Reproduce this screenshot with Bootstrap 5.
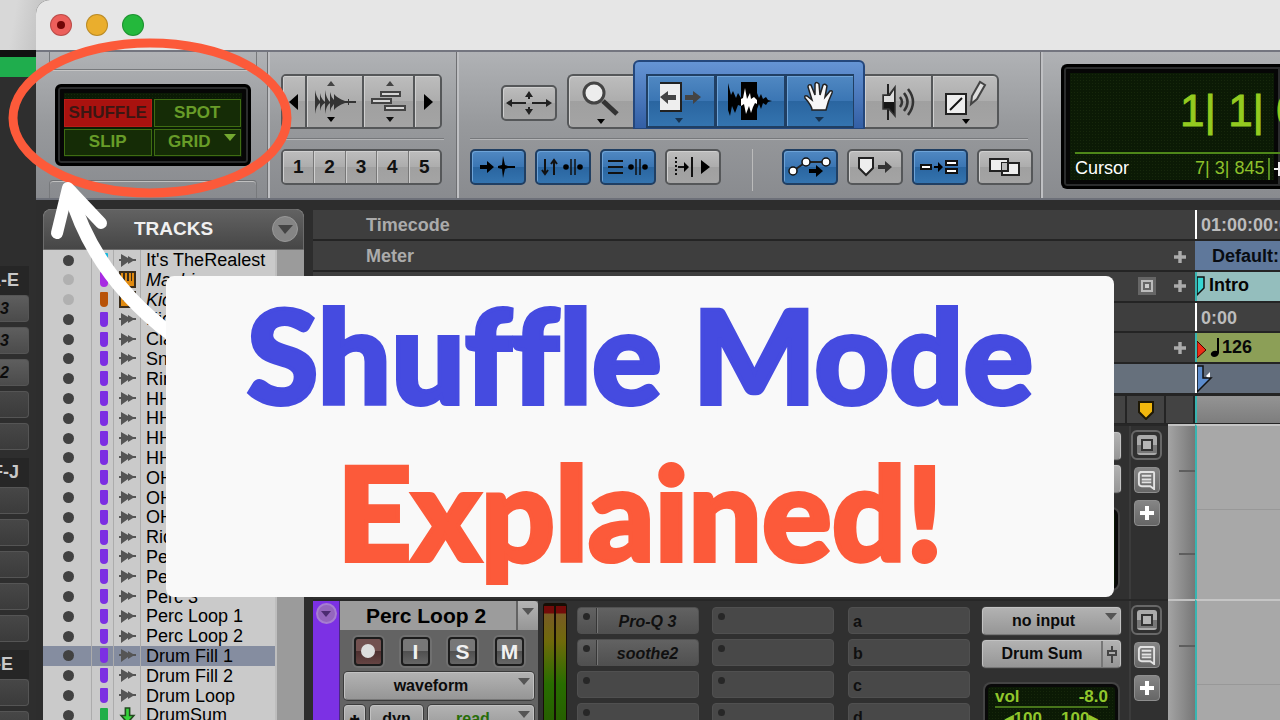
<!DOCTYPE html>
<html lang="en">
<head>
<meta charset="utf-8">
<meta name="viewport" content="width=device-width, initial-scale=1">
<title>Shuffle Mode Explained!</title>
<link rel="stylesheet" href="https://cdn.jsdelivr.net/npm/bootstrap@5.3.0/dist/css/bootstrap.min.css">
<style>
  body { font-family: "Liberation Sans", Arial, sans-serif; background: #2d2d2d; color: #000; line-height: 1.2; }
  button, select { font-family: inherit; }
  button { padding: 0; }
  svg { display: block; flex: none; }
  .scene { height: 100vh; background: #2d2d2d; }

  /* window behind */
  .behind { width: 48px; margin-right: -12px; background: #2e2e2e; }
  .behind-bar { height: 50px; background: linear-gradient(100deg, #d8d8d8 30%, #bdbdbd); }
  .behind-green { height: 27px; border-top: 7px solid #111; background: #1fad4d; }
  .behind-body { padding: 189px 19px 0 0; }
  .rack-label { height: 29px; font-size: 18px; font-weight: 700; color: #c8c8c8; padding-right: 10px; background: #262626; white-space: nowrap; display: flex; align-items: center; justify-content: flex-end; }
  .rack { gap: 5px; }
  .rack-slot { height: 27px; border: 1px solid #555; border-left: 0; border-radius: 0 4px 4px 0; background: linear-gradient(#474747, #3b3b3b); color: #0c0c0c; font: italic 700 16px/25px "Liberation Sans", sans-serif; display: flex; justify-content: flex-end; padding-right: 19px; }
  .rack-slot.used { background: linear-gradient(#5e5e5e, #4b4b4b); }

  /* main window */
  .daw { border-top-left-radius: 14px; background: #2d2d2d; z-index: 1; }
  .titlebar { height: 52px; background: #e6e6e6; border-bottom: 2px solid #73757f; padding-left: 14px; gap: 14px; }
  .light { width: 22px; height: 22px; border-radius: 50%; border: 1px solid #0003; }
  .toolbar { height: 148px; background: linear-gradient(#b0b2b5, #97999c 50%, #898b8f); border-bottom: 2px solid #6d7079; }
  .section { padding: 8px 9px 0 11px; border-left: 2px solid #bfc0c3; box-shadow: -1px 0 #6f7073; }
  .modes { width: 232px; padding: 0 11px 0 13px; border: 0; box-shadow: none; }
  .tab-top, .tab-bottom { height: 18px; border: 1px solid #77797c; border-top: 0; box-shadow: 0 1px #c5c5c5; }
  .tab-bottom { border-top: 1px solid #6e7073; border-bottom: 0; border-radius: 4px 4px 0 0; box-shadow: inset 0 1px #c0c0c0; }
  .lcd { background: #0b1a05 radial-gradient(#16270b 1px, transparent 1px) 0 0/3px 3px; border: 3px solid #000; box-shadow: inset 0 0 0 2px #2b2c2d, inset 0 0 0 6px #060606; border-radius: 6px; }
  .modes .lcd { height: 82px; margin: 0 6px; padding: 12px 7px 7px 6px; }
  .mode-grid { display: grid; grid-template-columns: 1fr 1fr; grid-template-rows: 1fr 1fr; gap: 2px; background: #0c1e04; height: 100%; }
  .mode { background: #152c06; border: 1px solid #3f6c12; color: #689c28; font-size: 17px; font-weight: 700; line-height: 20px; position: relative; }
  .mode.on { background: #a9120f; border-color: #b81c17; color: #3a1713; }
  .mode svg { position: absolute; right: 4px; top: 4px; }
  .row-top { height: 69px; }
  .rule { height: 2px; margin: 9px 4px 9px 0; background: #76787b; border-bottom: 1px solid #b5b6b8; }
  .tool { background: linear-gradient(#bdbdbd, #adadad 49%, #a0a0a0 50%, #a4a4a4); border: 2px solid #555759; color: #111; display: flex; align-items: center; justify-content: center; box-shadow: inset 1px 1px #cfcfcf; flex-shrink: 0; }
  .tool.blue { background: linear-gradient(#5088c2, #3b76b4 49%, #2a65a0 50%, #3474af); border-color: #203f63; box-shadow: inset 1px 1px #6da3d8; }
  .small-tool { width: 56px; height: 36px; border-radius: 5px; }
  .bottom-tools { gap: 9px; }
  .tool-set { border-radius: 5px; overflow: hidden; border: 2px solid #555759; }
  .tool-set .tool { border-width: 0 2px 0 0; }
  .tool-set .tool:last-child { border-right: 0; }
  .big { height: 55px; }
  .num { height: 36px; width: 161px; }
  .num .tool { font-size: 19px; font-weight: 700; border-right: 1px solid #777; width: 20%; }
  .smart { height: 69px; width: 232px; padding: 12px 9px 0 11px; background: linear-gradient(#6594d4, #335fa5); border: 2px solid #24477c; border-bottom-width: 1px; border-radius: 6px 6px 0 0; flex: none; }
  .smart .tool { border-width: 2px 1px 2px 2px; flex: 1 1 0; }
  .split { width: 2px; height: 42px; background: #777; border-right: 1px solid #bbb; margin: 0 20px 0 22px; align-self: center; }
  .counter { padding: 12px 0 0 18px; overflow: hidden; }
  .counter .lcd { height: 125px; border-right: 0; border-radius: 6px 0 0 6px; padding: 19px 0 0 11px; white-space: nowrap; overflow: hidden; }
  .big-count { font-size: 44px; line-height: 50px; height: 66px; padding-left: 105px; color: #93cb20; -webkit-text-stroke: 1px currentColor; }
  .cursor-row { border-top: 2px solid #4e8719; font-size: 18px; line-height: 29px; color: #fff; }
  .cursor-row output { color: #8ec02b; margin-left: 66px; margin-right: 4px; }

  /* track list */
  .workspace { background: #2d2d2d; padding: 9px 0 0 7px; gap: 9px; }
  .tracks { width: 261px; flex: none; border-radius: 8px 8px 0 0; overflow: hidden; background: #9b9b9b; }
  .tracks-head { height: 41px; background: linear-gradient(#626262, #464646); border: 1px solid #6c6c6c; border-radius: 8px 8px 0 0; color: #f0f0f0; font-size: 19px; font-weight: 700; }
  .tracks-head button { position: absolute; right: 5px; top: 6px; width: 26px; height: 26px; border: 1px solid #999; border-radius: 50%; background: #858585; }
  .track-list { margin: 0 27px -5px 0; background: #cacaca; border-right: 2px solid #bebebe; font-size: 18px; }
  .track-item { flex: 1 1 0; min-height: 0; display: grid; grid-template-columns: 49px 22px 27px 1fr; white-space: nowrap; overflow: hidden; }
  .track-item > span { display: flex; align-items: center; border-right: 1px solid #acacac; }
  .track-item > span:last-child { border: 0; padding-left: 5px; line-height: 20px; }
  .track-item.sel { background: #858da0; }
  .dot { width: 11px; height: 11px; border-radius: 50%; background: #414141; margin-left: 20px; }
  .off .dot { background: #b0b0b0; }
  .pill { width: 8px; height: 15px; margin-left: 8px; border-radius: 1px 1px 4px 4px; }

  /* edit area */
  .editor { min-width: 0; padding-top: 1px; }
  .rulers { height: 183px; display: grid; grid-template-rows: repeat(6, 1fr); gap: 2px; background: #242424; flex: none; }
  .ruler { display: grid; grid-template-columns: 1fr 85px; min-height: 0; font-size: 18px; font-weight: 700; }
  .ruler-name { background: #3e3e3e; color: #ababab; padding: 3px 9px 0 53px; display: flex; align-items: center; }
  .ruler-data { background: #404040; color: #bcbcbc; white-space: nowrap; overflow: hidden; display: flex; align-items: center; border-left: 2px solid #fff; padding-top: 3px; }
  .teal { border-left-color: #38b5b1; padding-top: 0; }
  .ruler-name button { border: 0; background: none; }
  .columns-head { display: grid; grid-template-columns: 1fr 37px 27px 85px; gap: 2px; height: 31px; padding-top: 3px; background: #242424; flex: none; }
  .columns-head > div { background: #434343; margin-bottom: 1px; }
  .strip { display: grid; grid-template-columns: 1fr 27px 85px; flex: none; }
  .scale { background: linear-gradient(90deg, #a4a4a4, #777); border-top: 2px solid #c2c2c2; padding-left: 11px; }
  .scale i { display: block; height: 2px; background: #5e5e5e; }
  .lane { background: #a8a8a8; border-left: 2px solid #38b5b1; border-top: 2px solid #c5c5c5; }
  .lane div { border-bottom: 1px solid #989898; height: 84px; }
  .controls { background: #303030; border-top: 2px solid #272727; overflow: hidden; }
  .sideicons { width: 39px; border-left: 2px solid #3b3b3b; padding: 4px 8px 3px 2px; gap: 7px; align-items: center; flex: none; margin-left: 8px; }
  .sq { width: 26px; height: 26px; border-radius: 4px; border: 1px solid #8e8e8e; background: linear-gradient(#858585, #666); display: grid; place-items: center; flex: none; }
  .sq.ring { width: 31px; height: 30px; background: #303030; border: 2px solid #686868; border-radius: 6px; }
  .swatch { width: 27px; background: #7c31e4; border-right: 1px solid #4b2787; flex: none; padding-top: 2px; }
  .swatch button { width: 21px; height: 21px; border-radius: 50%; border: 2px solid #a67ed0; background: #9466bd; display: grid; place-items: center; margin: 0 auto; }
  .head { width: 198px; background: #636363; flex: none; }
  .name-row { height: 29px; }
  .name-row > div { background: #9c9c9c; font-size: 21px; font-weight: 700; line-height: 30px; text-align: center; padding-right: 4px; }
  .name-row button { width: 20px; margin-left: 2px; border: 0; background: linear-gradient(#b5b5b5, #969696); border-radius: 0 4px 0 0; display: flex; justify-content: center; padding-top: 7px; }
  .rec-row { height: 42px; padding: 7px 14px 0; }
  .key { width: 29px; height: 29px; border: 2px solid #1c1c1c; border-radius: 4px; box-shadow: 0 0 0 2px #707070; background: linear-gradient(#777 49%, #505050 50%, #666); color: #f1f1f1; font-size: 21px; font-weight: 700; line-height: 24px; display: grid; place-items: center; }
  .key.rec { background: linear-gradient(#725150 49%, #4e3030 50%, #654443); }
  .selwrap { position: relative; }
  .selwrap svg { position: absolute; right: 4px; top: 6px; pointer-events: none; }
  .field { height: 28px; border: 1px solid #c2c2c2; border-bottom-color: #777; border-radius: 4px; background: linear-gradient(#b2b2b2, #969696); font-size: 16px; font-weight: 700; color: #0b0b0b; text-align: center; line-height: 24px; appearance: none; width: 100%; padding: 0 16px 0 0; box-shadow: 0 0 0 1px #3b3b3b; }
  .field.plain { padding: 0; }
  .meters { width: 24px; margin: 2px 0 0 5px; background: #160e05; border-radius: 3px; padding: 3px 1px; gap: 2px; flex: none; }
  .meters i { flex: 1; background: linear-gradient(#720b09 0 7px, #785b24 8px, #706a0b 35px, #286d00 78px, #244d00); }
  .slots { width: 122px; flex: none; padding-top: 6px; gap: 5px; display: flex; flex-direction: column; }
  .slot { height: 27px; border-radius: 4px; background: #484848; border: 1px solid #505050; flex: none; font-size: 16px; font-weight: 700; display: flex; color: #101010; text-align: left; width: 100%; }
  .slot::before { content: ""; width: 7px; height: 7px; border-radius: 50%; background: #272727; margin: 5px 0 0 5px; flex: none; }
  .slot.fx { background: linear-gradient(#626262, #505050); }
  .slot.fx span { border-left: 1px solid #363636; box-shadow: inset 1px 0 #777; margin-left: 6px; flex: 1; text-align: center; font-style: italic; line-height: 27px; }
  .slot.send { padding-left: 4px; line-height: 27px; }
  .slot.send::before { display: none; }
  .io { width: 139px; padding-top: 6px; flex: none; gap: 5px; }
  .io .lcd { margin: 11px 3px 0; padding: 0 7px; height: 80px; color: #91c72c; font-size: 17px; font-weight: 700; line-height: 19px; border-color: #090909; box-shadow: 0 0 0 2px #444; }
  .pan { border-top: 2px solid #47751a; line-height: 22px; }

  /* headline and mark-up */
  .headline { position: absolute; z-index: 3; left: 13%; right: 13%; top: 276px; height: 321px; background: #f9f9f9; border-radius: 8px; font-family: Lato, "Open Sans", sans-serif; font-size: 130px; font-weight: 900; line-height: 157px; color: #454be0; text-align: center; white-space: nowrap; font-variant-ligatures: none; -webkit-text-stroke: 4px currentColor; }
  .headline span { display: block; color: #fc5a3a; -webkit-text-stroke-color: #fc5a3a; }
  .markup { position: absolute; left: 0; top: 0; z-index: 2; pointer-events: none; }
</style>
</head>
<body>
<svg width="0" height="0" class="position-absolute" aria-hidden="true">
  <symbol id="wave" viewBox="0 0 17 13"><path fill="#555" d="M0 5h2V0l7 4V2l5 3h3v2h-3l-5 3V8l-7 5V7H0z"/></symbol>
  <symbol id="down" viewBox="0 0 12 7"><path d="M0 0h12L6 7z"/></symbol>
  <symbol id="inst" viewBox="0 0 17 17"><path fill="#3a2d1c" d="M0 0h17v17H0z"/><path fill="#e08a10" d="M2 2h2v8h2V2h2v8h2V2h2v8h1V2h2v13H2z"/></symbol>
  <symbol id="aux" viewBox="0 0 16 16"><path fill="#35d43a" stroke="#234b20" stroke-width="1.5" d="M6 1h4v7h4l-6 7-6-7h4z"/></symbol>
  <symbol id="plus" viewBox="0 0 14 14"><path fill="currentColor" d="M5 0h4v5h5v4H9v5H5V9H0V5h5z"/></symbol>
  <symbol id="target" viewBox="0 0 20 20"><rect width="20" height="20" rx="3" fill="#aaa"/><path fill="#777" d="M0 10h20v8H0z"/><rect x="5" y="5" width="10" height="10" fill="#b5b5b5" stroke="#333" stroke-width="2"/></symbol>
  <symbol id="note" viewBox="0 0 20 20"><path fill="none" stroke="#e2e2e2" stroke-width="2" d="M3 1h14q1 0 1 1v17l-4-3H5q-3 0-3-3V4q0-3 3-3z"/><path stroke="#e2e2e2" stroke-width="2" d="M5 5h10M5 9h10M5 12h10"/></symbol>
  <symbol id="fader" viewBox="0 0 10 17"><path stroke="#444" stroke-width="2" d="M5 0v17"/><path fill="#aaa" stroke="#444" stroke-width="2" d="M1 5h8v4H1z"/></symbol>
  <symbol id="hbars" viewBox="0 0 20 18"><path stroke="#111" stroke-width="1.500" d="M8 1v16M12 1v16"/><circle cx="3" cy="9" r="2.800"/><circle cx="17" cy="9" r="2.800"/></symbol>
</svg>

<div class="scene d-flex position-relative overflow-hidden">
  <aside class="behind flex-shrink-0">
    <div class="behind-bar"></div>
    <div class="behind-green"></div>
    <div class="behind-body">
      <div class="rack-label">A-E</div>
      <div class="rack d-flex flex-column">
        <div class="rack-slot used">3</div><div class="rack-slot used">3</div><div class="rack-slot used">-2</div><div class="rack-slot"></div><div class="rack-slot"></div>
      </div>
      <div class="rack-label mt-2">F-J</div>
      <div class="rack d-flex flex-column">
        <div class="rack-slot"></div><div class="rack-slot"></div><div class="rack-slot"></div><div class="rack-slot"></div><div class="rack-slot"></div>
      </div>
      <div class="rack-label mt-2 pe-3">-E</div>
      <div class="rack d-flex flex-column"><div class="rack-slot"></div><div class="rack-slot"></div></div>
    </div>
  </aside>

  <main class="daw flex-grow-1 d-flex flex-column overflow-hidden position-relative">
    <header class="titlebar d-flex align-items-center flex-shrink-0">
      <button class="light d-grid" style="background:#ec5f5b;place-items:center" aria-label="Close"><svg width="8" height="8"><circle cx="4" cy="4" r="4" fill="#720606"/></svg></button>
      <button class="light" style="background:#eaae2d" aria-label="Minimise"></button>
      <button class="light" style="background:#24b83c" aria-label="Zoom"></button>
    </header>

    <div class="toolbar d-flex flex-shrink-0">
      <section class="section modes d-flex flex-column justify-content-between flex-shrink-0">
        <div class="tab-top"></div>
        <div class="lcd">
          <div class="mode-grid">
            <button class="mode on">SHUFFLE</button><button class="mode">SPOT</button>
            <button class="mode">SLIP</button><button class="mode pe-3">GRID<svg width="12" height="7" fill="#74a930"><use href="#down"/></svg></button>
          </div>
        </div>
        <div class="tab-bottom"></div>
      </section>

      <section class="section flex-shrink-0" style="width:189px">
        <div class="row-top d-flex align-items-end">
          <div class="tool-set d-flex big" style="width:161px">
            <button class="tool" style="width:24px" aria-label="Zoom out"><svg width="10" height="16"><path d="M9 0v16L0 8z"/></svg></button>
            <button class="tool flex-fill" aria-label="Audio zoom"><svg width="42" height="44"><path fill="#444" d="M13 6l4-5 4 5z"/><path d="M13 37l4 5 4-5z"/><path fill="#333" d="M1 10q1 7 5 11v-8q1 6 5 9V10q1 8 5 12V12q1 5 4 8v-6q3 4 11 7h3v-2h1v2h7v2h-7v2h-1v-2h-3q-8 3-11 7v-6q-3 3-4 8v-9q-4 3-5 11V23q-4 2-5 8v-8q-4 3-5 11z"/></svg></button>
            <button class="tool flex-fill" aria-label="MIDI zoom"><svg width="36" height="44" fill="#d5d5d5" stroke="#444" stroke-width="2"><path fill="#444" stroke="none" d="M15 6l4-5 4 5z"/><path fill="#111" stroke="none" d="M15 37l4 5 4-5z"/><path d="M10 12h19v4H10zM1 19h19v4H1zM14 26h20v4H14z"/></svg></button>
            <button class="tool" style="width:25px" aria-label="Zoom in"><svg width="10" height="16"><path d="M1 0v16l9-8z"/></svg></button>
          </div>
        </div>
        <div class="rule"></div>
        <div class="tool-set d-flex num">
          <button class="tool">1</button><button class="tool">2</button><button class="tool">3</button><button class="tool">4</button><button class="tool">5</button>
        </div>
      </section>

      <section class="section flex-shrink-0" style="width:584px">
        <div class="row-top d-flex align-items-end">
          <button class="tool small-tool mb-2" style="margin-left:31px;margin-right:10px" aria-label="Zoom toggle"><svg width="46" height="26" stroke="#222" stroke-width="2"><path d="M4 13h16M26 13h16M23 4v5M23 17v5"/><path stroke="none" fill="#222" d="M0 13l6-4v8zM46 13l-6-4v8zM23 1l4 6h-8zM23 25l4-6h-8z"/></svg></button>
          <button class="tool big rounded-start" style="width:66px;border-right:0" aria-label="Zoomer"><svg width="40" height="46"><path stroke="#333" stroke-width="5" d="M22 22l14 13"/><circle cx="13" cy="14" r="10" fill="#ededed" stroke="#444" stroke-width="3"/><path d="M16 40h8l-4 5z"/></svg></button>
          <div class="smart d-flex">
            <button class="tool blue" aria-label="Trim"><svg width="44" height="44"><path fill="#eee" d="M1 4h21v28H1z"/><path fill="none" stroke="#222" stroke-width="2" d="M1 4h21v28H1"/><path fill="#444" d="M1 18l8-6v4h8v5H9v4zM42 18l-8-6v4h-8v5h8v4z"/><path fill="#17324e" d="M16 39h8l-4 5z"/></svg></button>
            <button class="tool blue" aria-label="Selector"><svg width="46" height="40"><path d="M14 1h16v38H14z"/><path d="M1 2l3 12 2-4 3 7 2-5 3 5v8l-3-1-3 8-3-7-2 10-2-6v7zM30 12l2 5 2-4 2 5 3-2 2 3 4 1-4 1-2 3-3-2-2 6-2-5-2 5z"/><path fill="#fff" d="M14 18l2-1 2-10 2 11 3-6 1 6 3-2 3 3v4l-2-1-2 4-2 6-2-7-3 8-2-10-3 2z"/></svg></button>
            <button class="tool blue" aria-label="Grabber"><svg width="34" height="46"><path fill="#f7f7f7" stroke="#222" stroke-width="1.500" d="M9 32q0-4-7-12-1-3 2-2l5 4L5 9q0-3 3-2l4 10V6q1-3 4 0l1 11 3-10q2-2 4 1l-2 11 5-6q3-1 2 2-4 8-6 17z"/><path fill="#17324e" d="M12 39h9l-5 5z"/></svg></button>
          </div>
          <button class="tool big" style="width:68px;border-left:0" aria-label="Scrubber"><svg width="36" height="42"><path stroke="#222" stroke-width="2" d="M8 3v36"/><path fill="#151515" stroke="#333" stroke-width="1.500" d="M3 14h6l6-8v29l-6-7H3z"/><path fill="#ddd" d="M4 15h6l4-6v12H4z"/><path fill="none" stroke="#333" stroke-width="2.500" d="M20 16q4 5 0 10M24 12q7 9 0 18M28 8q10 13 0 26"/></svg></button>
          <button class="tool big rounded-end" style="width:66px;border-left:0" aria-label="Pencil"><svg width="44" height="46"><path fill="#eee" stroke="#222" stroke-width="2" d="M3 15h20v20H3z"/><path stroke="#111" stroke-width="2" d="M7 31l12-12"/><path fill="#ddd" stroke="#444" stroke-width="2" d="M28 25l1-8 8-14 5 3-8 14z"/><path d="M19 40h8l-4 5z"/></svg></button>
        </div>
        <div class="rule"></div>
        <div class="bottom-tools d-flex">
          <button class="tool blue small-tool" aria-label="Tab to transients"><svg width="38" height="24"><path d="M1 10h7V6l7 6-7 6v-4H1zM19 11l4-1 1-9 2 9 3 1h7v2h-7l-3 1-2 9-1-9-4-1z"/></svg></button>
          <button class="tool blue small-tool" aria-label="Link timeline"><svg width="44" height="20"><path fill="none" stroke="#111" stroke-width="2" d="M4 2v15M1 13l3 4 3-4M13 18V3M10 7l3-4 3 4"/><use href="#hbars" x="22" y="1" width="20" height="18"/></svg></button>
          <button class="tool blue small-tool" aria-label="Link track"><svg width="42" height="20"><path stroke="#111" stroke-width="2" d="M1 4h15M1 10h15M1 16h15"/><use href="#hbars" x="21" y="1" width="20" height="18"/></svg></button>
          <button class="tool small-tool" aria-label="Insertion follows playback"><svg width="38" height="22"><path stroke="#111" stroke-width="2" stroke-dasharray="2 2" d="M2 1v20"/><path stroke="#111" stroke-width="2" d="M4 11h7M18 1v20"/><path d="M10 6l5 5-5 5zM27 4v14l9-7z"/></svg></button>
          <div class="split"></div>
          <button class="tool blue small-tool" aria-label="Automation follows edit"><svg width="44" height="24"><path fill="none" stroke="#222" stroke-width="2" d="M5 16L18 7h20"/><g fill="#fff" stroke="#111" stroke-width="1.500"><circle cx="5" cy="16" r="4"/><circle cx="18" cy="7" r="4"/><circle cx="38" cy="7" r="4"/></g><path d="M21 14h7v-4l7 6-7 6v-4h-7z"/></svg></button>
          <button class="tool small-tool" aria-label="Insert marker"><svg width="36" height="22"><path fill="#eee" stroke="#222" stroke-width="2" d="M2 2h14v10l-7 7-7-7z"/><path fill="#333" d="M21 9h7V5l7 6-7 6v-4h-7z"/></svg></button>
          <button class="tool blue small-tool" aria-label="Mirrored editing"><svg width="42" height="18"><g fill="#fff" stroke="#111" stroke-width="2"><path d="M2 7h10v4H2zM27 3h11v4H27zM27 11h11v4H27z"/></g><path d="M15 8h4V4l5 5-5 5v-4h-4z"/></svg></button>
          <button class="tool small-tool" aria-label="Layered editing"><svg width="34" height="20"><path fill="#eee" stroke="#222" stroke-width="2" d="M14 6h17v12H14zM2 2h18v12H2z"/><path fill="#bbb" d="M14 6h5v7h-5z"/></svg></button>
        </div>
      </section>

      <section class="section counter flex-grow-1">
        <div class="lcd">
          <div class="big-count">1| 1| 0</div>
          <div class="cursor-row">Cursor<output>7| 3| 845</output><svg class="d-inline align-middle" width="26" height="22"><path stroke="#578d20" stroke-width="2" d="M1 0v22"/><path stroke="#eee" stroke-width="2" d="M6 11h18M11 4v14M16 7v8"/></svg></div>
        </div>
      </section>
    </div>

    <div class="workspace d-flex flex-grow-1 overflow-hidden">
      <section class="tracks d-flex flex-column">
        <div class="tracks-head position-relative d-flex align-items-center justify-content-center flex-shrink-0">TRACKS
          <button class="d-grid" style="place-items:center" aria-label="Track list menu"><svg width="15" height="9" fill="#444"><path d="M0 0h15L7 9z"/></svg></button>
        </div>
        <ul class="track-list list-unstyled d-flex flex-column flex-grow-1" id="trackList"></ul>
      </section>

      <section class="editor d-flex flex-column flex-grow-1 overflow-hidden ps-0">
        <div class="rulers">
          <div class="ruler"><div class="ruler-name">Timecode</div><div class="ruler-data ps-1">01:00:00:00</div></div>
          <div class="ruler"><div class="ruler-name">Meter<button class="ms-auto text-reset" aria-label="Add meter"><svg width="12" height="12"><use href="#plus"/></svg></button></div><div class="ruler-data" style="background:#5f789b;border-color:#5f789b;color:#080c12;padding-left:15px">Default: 4/4</div></div>
          <div class="ruler"><div class="ruler-name pt-0"><button class="ms-auto" style="margin-right:18px" aria-label="Marker view"><svg width="18" height="18"><path fill="#666" d="M0 0h18v18H0z"/><path fill="none" stroke="#bbb" stroke-width="2" d="M4 4h10v10H4z"/><path fill="#ccc" d="M7 7h4v4H7z"/></svg></button><button class="text-reset" aria-label="Add marker"><svg width="12" height="12"><use href="#plus"/></svg></button></div><div class="ruler-data teal" style="background:#94bebd;color:#050505;gap:4px"><svg width="8" height="22"><path fill="#35d6d2" stroke="#111" stroke-width="1.500" d="M0 2h7v11l-7 7z"/></svg>Intro</div></div>
          <div class="ruler"><div class="ruler-name"></div><div class="ruler-data ps-1">0:00</div></div>
          <div class="ruler"><div class="ruler-name pt-0"><button class="ms-auto text-reset" aria-label="Add tempo"><svg width="12" height="12"><use href="#plus"/></svg></button></div><div class="ruler-data teal" style="background:#8c9f57;color:#080808;gap:2px"><svg width="23" height="24"><path fill="#ee2c15" stroke="#400" d="M0 5l9 9-9 8z"/><path d="M20 2h2v15q-1 4-5 4-4-1-3-4 2-3 6-2z"/></svg>126</div></div>
          <div class="ruler"><div class="ruler-name" style="background:#66707c"></div><div class="ruler-data pt-0" style="background:#626d7c"><svg width="16" height="28"><path fill="#fff" d="M9 11l4-4v8z"/><path fill="#5c8ccc" stroke="#111" stroke-width="1.500" d="M0 1h6v12h8L0 27z"/></svg></div></div>
        </div>
        <div class="columns-head">
          <div></div>
          <div class="d-grid" style="place-items:center"><svg width="18" height="20"><path fill="#f1b70d" stroke="#1e1805" stroke-width="2" d="M2 2h14v10l-7 7-7-7z"/></svg></div>
          <div></div>
          <div style="border-left:2px solid #38b5b1;background:linear-gradient(#949494,#7d7d7d)"></div>
        </div>

        <div class="strip" style="height:175px">
          <div class="controls d-flex justify-content-end">
            <div class="io d-flex flex-column">
              <button class="field" aria-label="Input"></button>
              <button class="field plain" aria-label="Output"></button>
              <div class="lcd"></div>
            </div>
            <div class="sideicons d-flex flex-column">
              <button class="sq ring" aria-label="Automation"><svg width="20" height="20"><use href="#target"/></svg></button>
              <button class="sq" aria-label="Comments"><svg width="19" height="19"><use href="#note"/></svg></button>
              <button class="sq text-white" aria-label="Add lane"><svg width="14" height="14"><use href="#plus"/></svg></button>
            </div>
          </div>
          <div class="scale"><i style="margin-top:44px"></i><i style="margin-top:81px"></i></div>
          <div class="lane"><div></div></div>
        </div>

        <div class="strip" style="height:175px">
          <div class="controls d-flex">
            <div class="swatch"><button aria-label="Track colour"><svg width="10" height="6" fill="#4c2c72"><path d="M0 0h10L5 6z"/></svg></button></div>
            <div class="head">
              <div class="name-row d-flex"><div class="flex-fill">Perc Loop 2</div><button aria-label="Track menu"><svg width="12" height="7" fill="#555"><use href="#down"/></svg></button></div>
              <div class="rec-row d-flex justify-content-between">
                <button class="key rec" aria-label="Record"><svg width="15" height="15"><circle cx="7" cy="7" r="7" fill="#ddd"/></svg></button>
                <button class="key">I</button><button class="key">S</button><button class="key">M</button>
              </div>
              <div class="px-1 d-flex flex-column" style="gap:5px">
                <div class="selwrap"><select class="field" aria-label="Track view"><option>waveform</option></select><svg width="12" height="7" fill="#555"><use href="#down"/></svg></div>
                <div class="d-flex" style="gap:5px">
                  <button class="field plain" style="width:21px;font-size:25px;line-height:36px;overflow:hidden">*</button>
                  <button class="field plain" style="width:53px">dyn</button>
                  <div class="selwrap flex-fill"><select class="field" style="color:#286d08" aria-label="Automation mode"><option>read</option></select><svg width="12" height="7" fill="#555"><use href="#down"/></svg></div>
                </div>
              </div>
            </div>
            <div class="meters d-flex"><i></i><i></i></div>
            <div class="slots" style="margin-left:10px"><button class="slot fx"><span>Pro-Q 3</span></button><button class="slot fx"><span>soothe2</span></button><button class="slot" aria-label="Insert c"></button><button class="slot" aria-label="Insert d"></button></div>
            <div class="slots" style="margin-left:13px"><button class="slot" aria-label="Insert f"></button><button class="slot" aria-label="Insert g"></button><button class="slot" aria-label="Insert h"></button><button class="slot" aria-label="Insert i"></button></div>
            <div class="slots" style="margin-left:14px"><button class="slot send">a</button><button class="slot send">b</button><button class="slot send">c</button><button class="slot send">d</button></div>
            <div class="io d-flex flex-column ms-auto">
              <div class="selwrap"><select class="field" aria-label="Track input"><option>no input</option></select><svg width="12" height="7" fill="#555"><use href="#down"/></svg></div>
              <button class="field plain d-flex align-items-center"><span class="flex-fill">Drum Sum</span><span class="d-grid h-100" style="width:19px;place-items:center;border-left:2px solid #777"><svg width="10" height="17"><use href="#fader"/></svg></span></button>
              <div class="lcd"><div class="d-flex justify-content-between"><span>vol</span><span>-8.0</span></div><div class="pan d-flex justify-content-around"><span>◂100</span><span>100▸</span></div></div>
            </div>
            <div class="sideicons d-flex flex-column">
              <button class="sq ring" aria-label="Automation"><svg width="20" height="20"><use href="#target"/></svg></button>
              <button class="sq" aria-label="Comments"><svg width="19" height="19"><use href="#note"/></svg></button>
              <button class="sq text-white" aria-label="Add lane"><svg width="14" height="14"><use href="#plus"/></svg></button>
            </div>
          </div>
          <div class="scale"><i style="margin-top:44px"></i></div>
          <div class="lane"><div></div></div>
        </div>
      </section>
    </div>
  </main>

  <svg class="markup" width="300" height="350" fill="none" aria-hidden="true">
    <ellipse cx="150" cy="118" rx="137" ry="75" stroke="#fc5a3a" stroke-width="9"/>
    <path stroke="#fff" stroke-width="12" stroke-linecap="round" stroke-linejoin="round" d="M57 233L68 188L101 223"/>
    <path stroke="#fff" stroke-width="14" stroke-linecap="round" d="M70 192Q94 276 172 335"/>
  </svg>
  <h1 class="headline m-0">Shuffle Mode<span>Explained!</span></h1>
</div>

<script>
  const V = '#7c2fe2';
  const tracks = [
    ["It's TheRealest", '#18b6dc'], ['Machine', '#a72be2', 'inst'], ['Kick', '#b85308', 'inst'], ['Kick', V],
    ['Clap', V], ['Sn', V], ['Rim', V], ['HH', V], ['HH', V], ['HH', V], ['HH', V],
    ['OH', V], ['OH', V], ['OH', V], ['Ride', V], ['Perc', V], ['Perc', V], ['Perc 3', V],
    ['Perc Loop 1', V], ['Perc Loop 2', V], ['Drum Fill 1', V], ['Drum Fill 2', V], ['Drum Loop', V], ['DrumSum', '#20ae48', 'aux']
  ];
  document.getElementById('trackList').innerHTML = tracks.map(([name, colour, kind = 'wave']) => `
    <li class="track-item ${kind === 'inst' ? 'off fst-italic' : ''} ${name === 'Drum Fill 1' ? 'sel' : ''}">
      <span><i class="dot"></i></span><span><i class="pill" style="background:${colour}"></i></span>
      <span class="justify-content-center"><svg width="17" height="${kind === 'wave' ? 13 : 17}"><use href="#${kind}"/></svg></span><span>${name}</span>
    </li>`).join('');
</script>
<script src="https://cdn.jsdelivr.net/npm/bootstrap@5.3.0/dist/js/bootstrap.bundle.min.js"></script>
</body>
</html>
